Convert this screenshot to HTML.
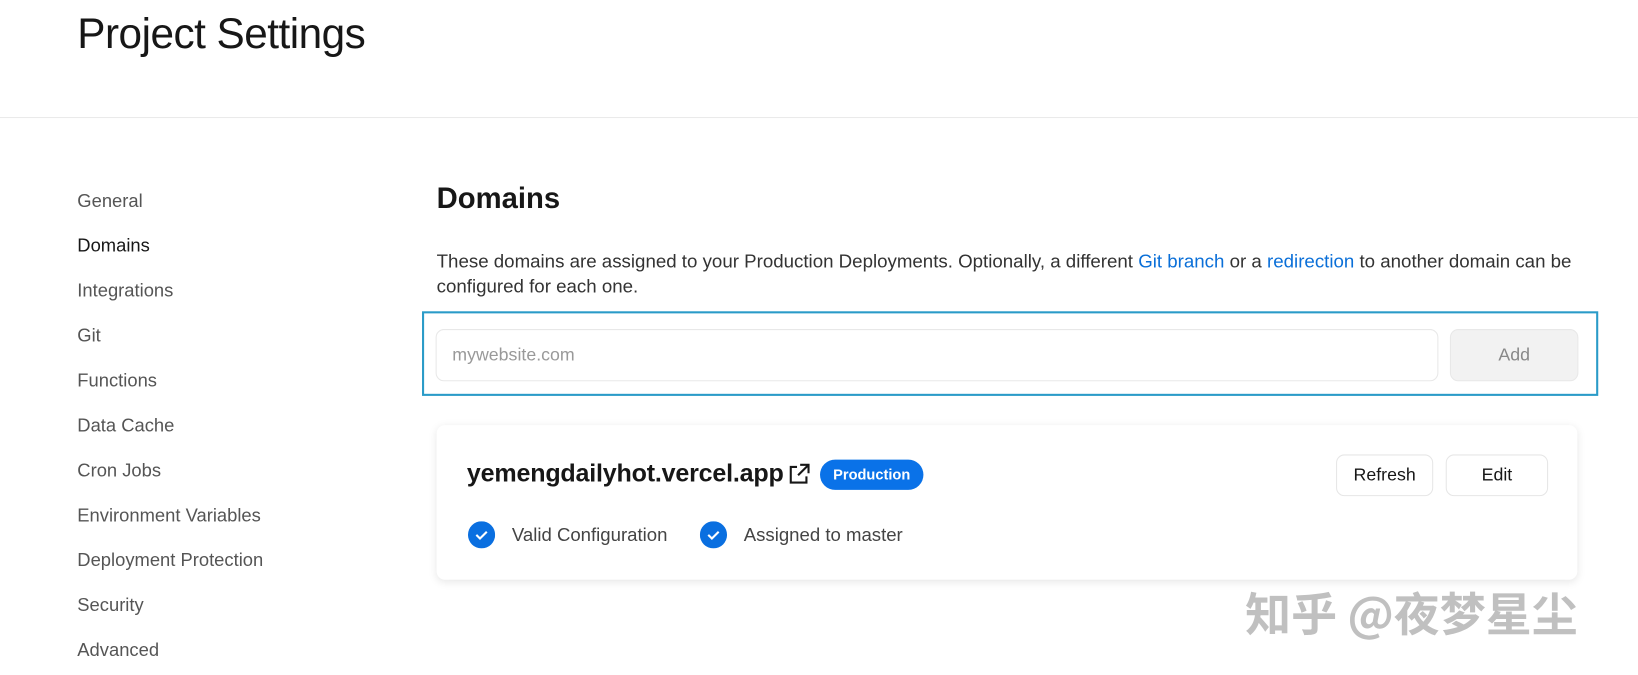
<!DOCTYPE html>
<html><head><meta charset="utf-8"><style>
*{box-sizing:border-box;margin:0;padding:0}
body{width:1638px;height:675px;overflow:hidden;background:#fff;font-family:"Liberation Sans","Noto Sans CJK SC",sans-serif;color:#171717;position:relative}
#w{position:absolute;left:0;top:0;width:1568px;height:646px;transform:scale(1.0446);transform-origin:0 0}
.abs{position:absolute}
h1{position:absolute;left:74px;top:9px;font-size:40.5px;font-weight:400;letter-spacing:-0.5px}
.hr{position:absolute;left:0;top:112px;width:1568px;height:1px;background:#eaeaea}
.nav a{position:absolute;left:74px;font-size:17.6px;color:#555;text-decoration:none}
.nav a.act{color:#171717}
.btn{position:absolute;border:1px solid #e6e6e6;border-radius:8px;font-size:17px;display:flex;align-items:center;justify-content:center;background:#fff}
</style></head><body><div id="w">
<h1>Project Settings</h1>
<div class="hr"></div>
<div class="nav">
<a style="top:182px">General</a>
<a class="act" style="top:225px">Domains</a>
<a style="top:268px">Integrations</a>
<a style="top:311px">Git</a>
<a style="top:354px">Functions</a>
<a style="top:397px">Data Cache</a>
<a style="top:440px">Cron Jobs</a>
<a style="top:483px">Environment Variables</a>
<a style="top:526px">Deployment Protection</a>
<a style="top:569px">Security</a>
<a style="top:612px">Advanced</a>
</div>
<div class="abs" style="left:418px;top:174px;font-size:28px;font-weight:700">Domains</div>
<div class="abs" style="left:418px;top:238px;width:1110px;font-size:17.9px;line-height:24px;color:#333">These domains are assigned to your Production Deployments. Optionally, a different <span style="color:#0a6fd8">Git branch</span> or a <span style="color:#0a6fd8">redirection</span> to another domain can be configured for each one.</div>
<div class="abs" style="left:404px;top:298px;width:1126px;height:81px;border:2px solid #2a9bc8"></div>
<div class="abs" style="left:417px;top:315px;width:960px;height:50px;border:1px solid #e8e8e8;border-radius:8px;padding-left:15px;line-height:48px;font-size:17px;color:#999">mywebsite.com</div>
<div class="abs" style="left:1388px;top:315px;width:123px;height:50px;border-radius:8px;background:#f2f2f2;border:1px solid #e8e8e8;text-align:center;line-height:48px;font-size:17px;color:#888">Add</div>
<div class="abs" style="left:418px;top:407px;width:1092px;height:148px;border-radius:8px;background:#fff;box-shadow:0 2px 8px rgba(0,0,0,.1)"></div>
<div class="abs" style="left:447px;top:440px;font-size:24px;font-weight:700;letter-spacing:-0.2px">yemengdailyhot.vercel.app</div>
<svg class="abs" style="left:754px;top:443px" width="22" height="22" viewBox="0 0 22 22" fill="none" stroke="#171717" stroke-width="2"><path d="M9 4H3v15h15v-6M12 2h8v8M20 2L10 12"/></svg>
<div class="abs" style="left:785px;top:440px;width:99px;height:29px;border-radius:15px;background:#0a72e8;color:#fff;font-size:14px;font-weight:700;text-align:center;line-height:29px">Production</div>
<div class="btn" style="left:1279px;top:435px;width:93px;height:40px">Refresh</div>
<div class="btn" style="left:1384px;top:435px;width:98px;height:40px">Edit</div>
<svg class="abs" style="left:448px;top:499px" width="26" height="26"><circle cx="13" cy="13" r="13" fill="#0a6fe0"/><path d="M8 13l3.5 3.5L18 10" stroke="#fff" stroke-width="2" fill="none"/></svg>
<div class="abs" style="left:490px;top:502px;font-size:17.8px;color:#444">Valid Configuration</div>
<svg class="abs" style="left:670px;top:499px" width="26" height="26"><circle cx="13" cy="13" r="13" fill="#0a6fe0"/><path d="M8 13l3.5 3.5L18 10" stroke="#fff" stroke-width="2" fill="none"/></svg>
<div class="abs" style="left:712px;top:502px;font-size:17.8px;color:#444">Assigned to master</div>
<div class="abs" style="left:1192px;top:557px;font-size:44px;font-weight:700;color:#c0c0c0;font-family:'Noto Sans CJK SC',sans-serif;letter-spacing:0px;line-height:56px">知乎 @夜梦星尘</div>
</div></body></html>
